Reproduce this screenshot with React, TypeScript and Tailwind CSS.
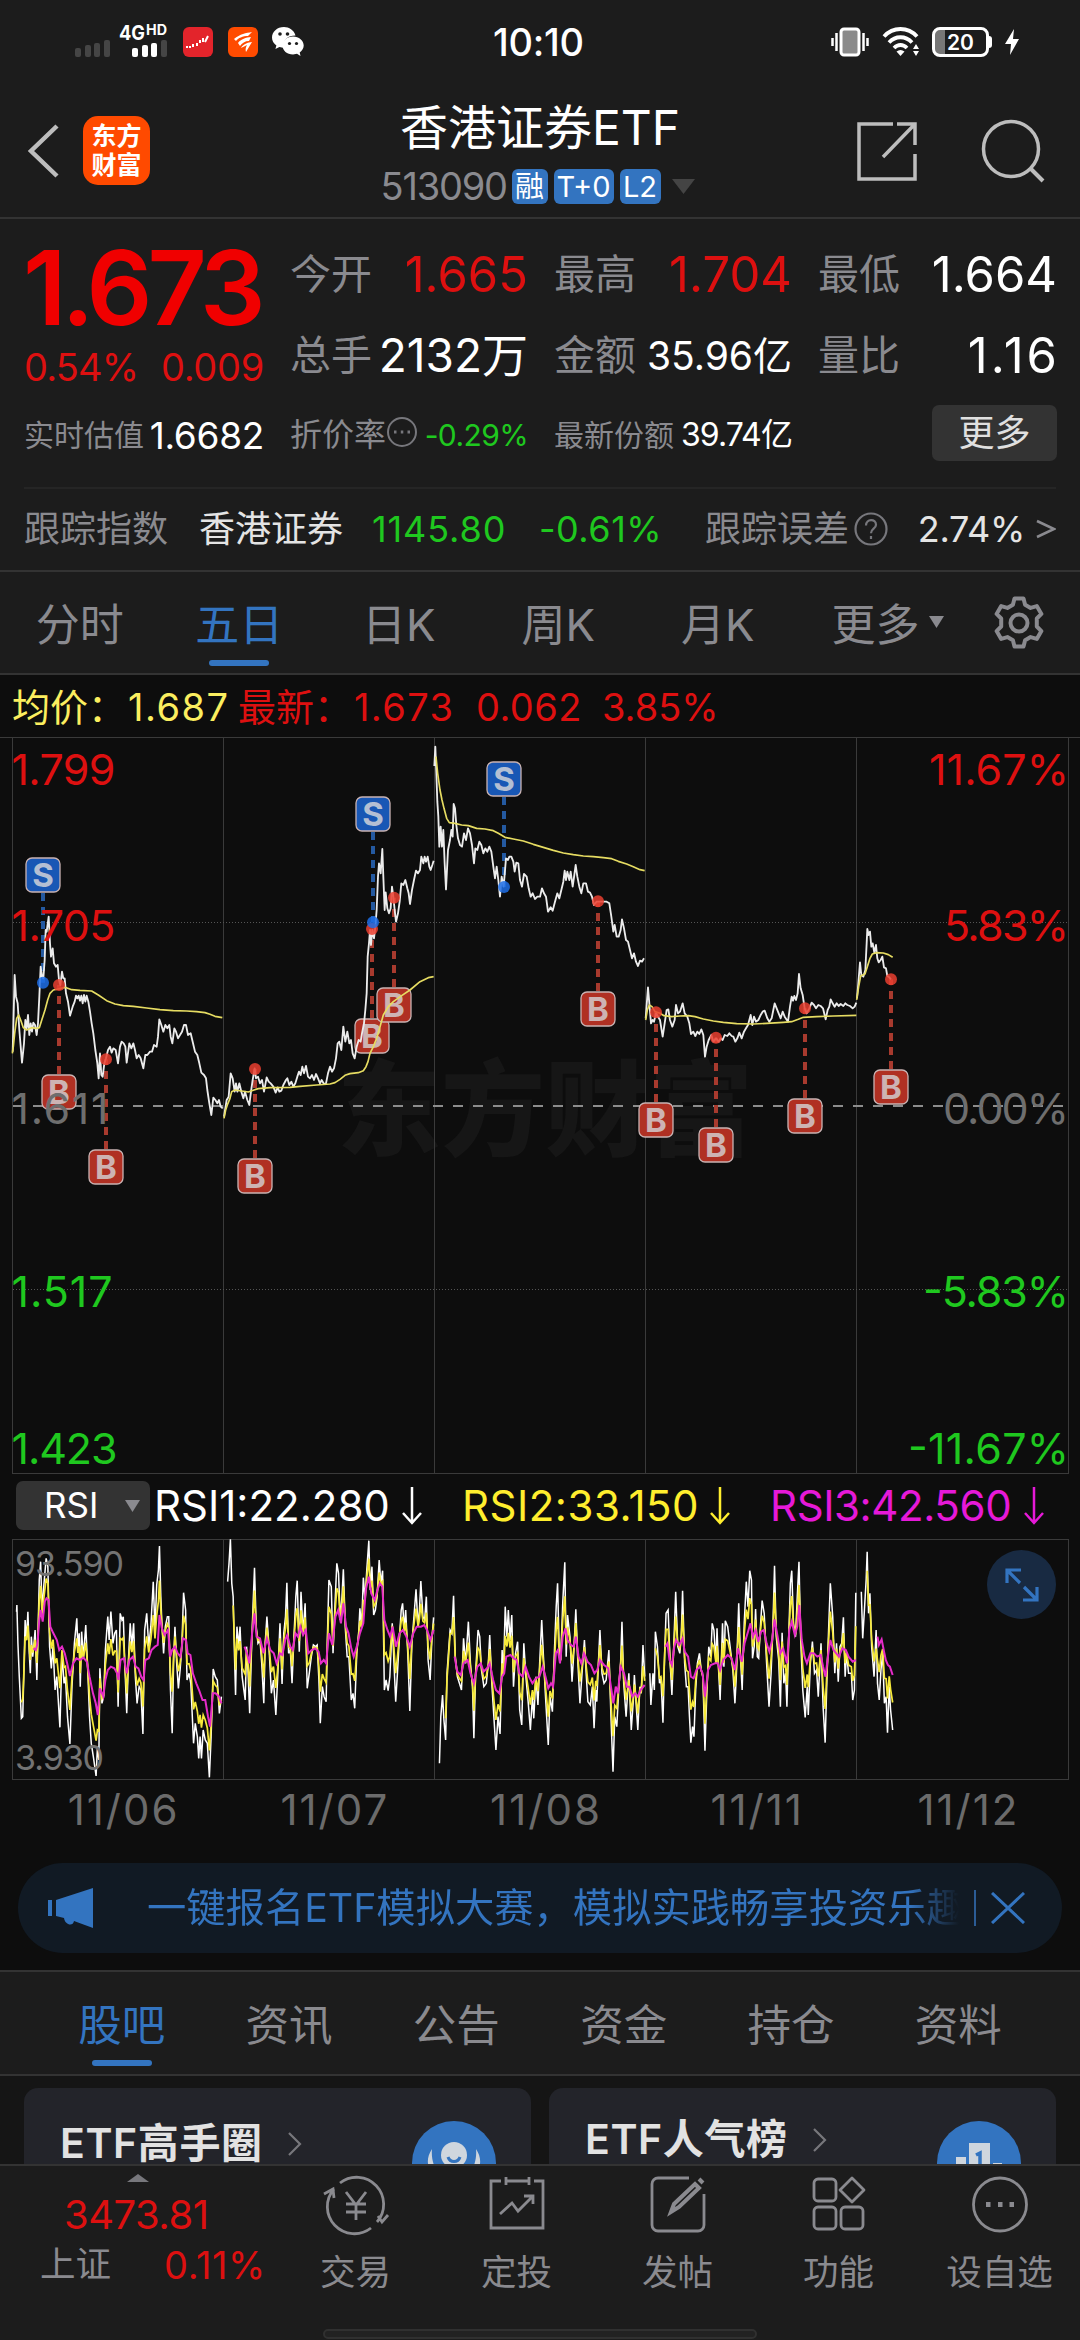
import React from 'react';

type Point = [number, number];

const toPoints = (s: string, dx = 0): Point[] =>
  s.trim().split(/\s+/).map((p) => {
    const [x, y] = p.split(',').map(Number);
    return [x + dx, y];
  });

const toAttr = (pts: Point[]) => pts.map((p) => p.join(',')).join(' ');

/* Intraday price, one entry per session */
const PRICE: Point[][] = [
  toPoints('38,965 44,735 48,800 53,820 58,900 66,998 72,940 76,870 80,895 84,855 88,915 92,880 96,905 100,878 105,885 110,915 114,880 118,800 122,710 126,740 130,745 134,690 137,600 140,605 146,560 150,640 153,680 158,655 162,700 168,710 173,705 177,750 181,765 186,725 190,745 194,745 198,790 204,815 210,857 218,830 224,815 228,797 232,805 236,797 240,812 244,797 248,820 252,795 256,815 260,797 265,815 270,845 275,880 280,910 286,960 292,1000 296,1045 300,970 304,1035 308,1040 313,1000 318,985 324,960 330,950 335,968 340,955 347,960 354,1000 360,950 365,935 371,940 376,950 380,998 388,940 394,955 400,940 405,960 410,985 416,975 422,985 430,1015 436,975 442,975 450,965 456,965 462,945 470,950 474,920 478,868 484,885 490,905 496,885 502,895 508,885 512,920 517,940 523,895 528,905 534,925 540,915 546,905 552,885 558,885 564,915 572,910 578,935 585,965 592,975 598,1000 604,1028 612,1035 618,1045 622,1080 628,1120 634,1155 640,1103 646,1110 652,1120 657,1110 662,1130 668,1135'),
  toPoints('672,1160 680,1110 686,1100 692,1030 698,1045 704,1085 708,1060 712,1085 718,1060 724,1085 730,1105 735,1085 742,1110 748,1125 753,1085 758,1050 764,1015 768,1045 774,1040 780,1060 786,1050 792,1085 800,1042 806,1055 812,1060 820,1070 827,1088 833,1072 838,1085 844,1082 850,1065 858,1050 862,1045 868,1065 874,1055 880,1070 886,1060 892,1040 897,1025 902,1035 907,1010 912,1030 918,1008 924,1040 930,1045 936,1035 942,1050 948,1032 954,1045 960,1060 965,1050 972,1062 978,1060 984,1030 990,1010 996,1025 1002,1015 1008,985 1013,940 1018,935 1024,960 1030,890 1036,935 1042,905 1048,940 1053,930 1058,970 1064,985 1070,950 1076,930 1082,935 1086,910 1092,880 1096,840 1100,790 1103,680 1107,640 1110,600 1113,645 1117,600 1122,625 1126,590 1130,540 1134,440 1137,400 1142,430 1147,357 1150,440 1154,540 1157,487 1162,535 1167,550 1172,535 1176,470 1180,500 1184,540 1188,575 1194,550 1199,515 1204,460 1210,465 1216,450 1222,475 1226,490 1230,522 1236,480 1242,450 1248,422 1254,430 1260,420 1264,380 1270,400 1274,380 1278,395 1283,380 1288,410 1292,420 1297,405 1301,392'),
  toPoints('283,108 286,50 289,130 292,215 295,260 298,350 302,290 306,350 310,300 314,400 318,478 324,360 330,330 334,300 338,320 341,222 345,235 349,285 354,325 360,345 366,350 372,310 378,330 384,295 390,310 396,345 402,400 406,355 412,360 418,335 424,345 430,370 436,355 442,365 448,350 454,365 460,410 465,445 470,410 475,450 480,500 485,440 491,470 498,385 504,390 508,380 514,380 520,395 524,425 529,398 535,400 540,450 546,470 552,432 560,440 566,475 572,500 578,490 585,507 592,500 600,500 606,475 612,490 618,500 624,545 632,532 638,542 645,515 652,490 658,505 664,480 670,455 674,422 678,450 682,425 688,450 692,425 698,470 703,435 707,405 712,440 718,470 724,490 730,460 738,460 744,485 750,488 756,500 762,525 770,515 780,515 790,515 800,515 808,520 814,560 820,605 824,585 830,620 836,620 842,600 846,568 852,595 858,630 864,635 870,660 876,685 882,670 888,695 894,708 900,692 906,695 912,685', 1020),
  toPoints('17,865 24,772 28,820 33,880 38,870 42,875 48,850 54,860 60,870 68,920 74,880 80,840 85,838 90,870 97,890 104,870 108,825 114,850 120,845 128,820 134,850 142,860 148,880 153,912 160,905 166,918 172,905 178,912 184,898 190,915 195,980 200,950 206,930 214,915 220,935 228,925 236,935 242,925 248,930 254,915 262,918 268,910 275,918 280,920 286,935 292,925 298,908 305,925 312,905 318,895 324,885 332,855 337,885 342,860 348,875 355,870 362,855 368,845 374,842 382,865 388,875 395,865 400,840 404,820 410,835 416,850 422,865 428,845 434,860 444,875 450,830 455,800 459,812 463,798 468,810 473,790 477,732 482,775 488,795 494,835 500,850 508,835 515,818 522,825 528,835 535,825 542,828 549,835 557,868 563,840 568,830 572,808 578,820 584,830 590,820 596,828 602,822 610,828 616,820 622,825 630,828 638,835 644,830 649,818', 1920),
  toPoints('651,805 655,760 660,697 664,735 670,740 676,720 680,640 682,597 686,615 690,605 694,650 698,640 703,668 708,645 712,685 716,697 722,690 727,680 732,712 738,715 742,738 748,742 753,748', 1920),
];

const AVERAGE: Point[][] = [
  toPoints('37,970 40,950 44,910 50,865 56,855 62,870 70,893 80,900 95,893 110,895 118,893 126,868 135,840 143,810 150,790 160,780 175,777 195,772 215,779 240,781 275,783 295,795 320,812 345,822 370,827 400,829 440,834 480,839 520,842 560,843 590,845 615,848 630,853 645,859 667,863'),
  toPoints('672,1165 677,1140 682,1125 690,1105 695,1085 705,1080 725,1083 745,1086 762,1080 775,1076 810,1073 870,1072 900,1069 950,1065 990,1062 1005,1058 1020,1048 1035,1036 1050,1031 1075,1028 1090,1022 1098,1010 1104,995 1110,970 1120,950 1130,925 1140,890 1150,855 1165,830 1180,815 1205,797 1230,780 1260,755 1285,743 1301,740'),
  toPoints('288,80 293,130 300,180 306,210 312,235 320,265 328,278 345,280 365,285 385,287 410,295 435,297 460,302 475,310 495,322 520,327 550,333 580,343 610,352 640,361 670,369 700,374 730,378 760,380 790,383 815,386 835,394 860,402 880,410 900,419 914,422', 1020),
  toPoints('17,870 22,840 28,825 36,830 45,845 60,850 72,857 95,860 120,858 145,857 165,860 190,867 220,873 250,877 290,881 340,882 380,880 430,877 455,875 475,868 490,862 530,860 580,858 649,856', 1920),
  toPoints('650,810 656,770 662,738 675,732 682,710 690,685 697,672 710,668 730,669 745,674 758,682', 1920),
];

interface Trade {
  side: 'B' | 'S';
  x: number;
  box: number;
  dot: number;
}

const TRADES: Trade[] = [
  { side: 'S', x: 43, box: 875, dot: 982.7 },
  { side: 'B', x: 59, box: 1092, dot: 985 },
  { side: 'B', x: 106, box: 1167, dot: 1059.3 },
  { side: 'B', x: 255, box: 1176, dot: 1069 },
  { side: 'B', x: 372, box: 1036, dot: 929 },
  { side: 'S', x: 373, box: 814, dot: 922.3 },
  { side: 'B', x: 394, box: 1005, dot: 897.7 },
  { side: 'S', x: 504, box: 779, dot: 887 },
  { side: 'B', x: 598, box: 1009, dot: 901.3 },
  { side: 'B', x: 656, box: 1120, dot: 1012.3 },
  { side: 'B', x: 716, box: 1145, dot: 1037.7 },
  { side: 'B', x: 805, box: 1116, dot: 1008.3 },
  { side: 'B', x: 891, box: 1087, dot: 979.3 },
];

const RSI_FAST: Point[][] = [
  toPoints('48,245 49,225 52,340 56,440 62,565 66,560 69,440 73,270 77,330 81,245 85,370 88,430 91,320 95,380 98,350 102,300 107,450 110,330 114,150 118,95 122,240 127,170 134,85 139,110 144,350 149,415 154,350 160,480 165,440 174,592 180,370 186,460 190,440 196,560 203,642 209,470 216,340 223,265 226,350 230,310 233,470 237,305 242,385 249,285 254,400 260,560 265,640 271,680 279,738 283,650 287,690 290,415 296,520 301,500 306,360 313,260 317,330 322,245 328,340 333,310 338,300 343,530 349,250 354,270 358,260 363,420 368,550 373,390 378,280 383,350 388,280 393,440 398,520 404,470 409,480 415,612 420,300 426,250 432,350 438,290 445,155 450,300 455,165 460,120 463,48 467,200 470,280 475,370 480,290 486,260 490,260 495,480 500,610 504,400 508,290 513,400 518,475 523,420 528,350 533,188 539,240 543,450 549,430 554,460 562,640 567,580 573,620 577,685 581,620 585,685 590,600 596,630 602,640 608,742 613,620 619,417 625,440 631,450 637,550 643,500'),
  toPoints('661,155 665,100 669,28 673,160 677,200 681,380 684,495 688,290 693,350 697,290 703,440 712,510 716,350 720,420 725,550 730,370 735,220 739,113 744,290 749,340 755,330 760,400 766,520 770,340 775,260 781,350 788,490 794,450 801,555 806,450 813,280 819,462 824,310 829,260 833,158 838,370 843,360 848,460 854,310 859,200 863,152 869,365 874,185 880,310 886,220 892,475 898,430 904,380 910,345 916,350 921,345 926,450 930,580 936,470 941,500 947,515 951,310 955,150 962,170 967,370 972,240 978,100 983,130 988,270 993,200 997,118 1003,300 1008,380 1013,380 1020,510 1025,490 1030,535 1036,370 1042,300 1045,235 1050,290 1055,143 1060,210 1065,120 1071,32 1075,180 1080,110 1085,255 1090,240 1095,200 1101,90 1106,160 1111,122 1116,480 1121,450 1127,482 1132,440 1139,280 1144,400 1149,515 1154,430 1160,320 1165,240 1169,220 1174,300 1178,240 1184,370 1190,543 1196,340 1202,260 1208,178 1214,290 1218,240 1222,153 1228,260 1233,270 1238,200 1243,390 1249,450 1254,330 1259,262'),
  [
    ...toPoints('1276,700 1280,560 1285,495 1289,570 1294,630 1298,430 1302,370 1307,300 1312,310 1317,197 1322,380 1328,440 1334,460 1340,480 1346,325 1352,400 1360,275 1366,400 1372,470 1376,625 1381,430 1388,300 1393,320 1398,420 1405,470 1412,460 1418,400 1422,315 1428,460 1434,560 1440,660 1446,560 1452,612 1458,360 1462,430 1467,230 1472,320 1476,240 1481,330 1486,255 1491,470 1497,370 1503,335 1509,540 1515,585 1521,340 1527,440 1534,520 1540,600 1546,500 1550,565 1556,440 1562,525 1567,400'),
    ...toPoints('5,270 10,380 16,500 24,645 29,500 36,545 42,360 47,230 51,160 56,370 60,390 66,220 72,97 76,380 80,255 87,320 93,455 98,370 104,238 110,400 116,520 122,430 129,330 134,430 139,515 146,525 152,470 157,595 162,480 165,515 170,390 174,300 180,430 186,460 192,450 200,360 206,560 212,725 217,560 223,590 229,470 234,400 238,275 243,460 250,560 258,430 265,600 271,510 274,435 279,520 284,600 290,470 294,490 299,345 304,440', 1568),
  ],
  toPoints('319,430 322,525 328,430 332,480 335,305 341,350 347,460 351,440 357,578 362,370 366,250 372,240 378,400 383,495 388,360 394,185 400,350 406,370 410,320 414,182 420,400 425,470 430,470 434,560 438,638 443,590 447,620 452,480 457,400 463,370 468,420 473,440 479,662 484,500 490,350 496,380 500,280 505,300 511,400 514,295 519,430 523,510 530,280 534,410 538,272 545,290 552,350 560,420 566,520 570,440 577,220 582,380 587,480 593,280 599,155 604,230 609,122 614,150 617,385 622,350 626,237 631,380 635,385 640,290 645,212 651,250 658,400 665,530 671,430 676,300 681,107 686,320 693,390 698,530 703,308 708,460 713,430 717,530 722,330 727,160 731,122 736,280 742,320 747,200 752,95 757,330 763,480 770,562 776,470 779,555 785,400 791,335 797,430 803,420 808,500 813,400 816,340 822,530 828,638 833,450 838,300 843,160 850,260 856,430 861,340 866,455 871,350 876,340 881,262 886,440 890,370 896,430 904,430 908,510 913,480 917,188', 1568),
  toPoints('933,185 937,325 942,240 947,150 950,65 954,250 958,190 963,350 970,440 976,300 980,460 985,510 990,420 995,370 1000,520 1005,500 1009,608 1014,470 1018,540 1024,600', 1568),
];

const RSI_SLOW: Point[][] = [
  toPoints('97,355 104,360 109,340 114,270 118,240 124,275 130,215 135,205 141,210 146,290 155,310 165,330 172,360 180,350 188,370 195,400 203,438 212,400 222,385 232,390 242,383 252,395 260,440 270,490 278,520 284,555 290,475 300,500 306,450 313,420 322,410 332,415 340,430 344,450 350,390 360,385 368,430 376,390 386,380 394,410 402,415 410,440 417,450 422,390 432,385 440,360 450,350 458,345 463,255 470,295 478,315 488,300 494,380 500,360 508,350 516,370 524,380 531,325 540,330 545,370 553,375 560,430 570,460 578,480 588,510 596,510 604,560 610,590 618,490 626,490 636,500 643,520'),
  toPoints('710,350 717,370 724,400 732,310 739,250 745,320 755,325 765,370 775,325 785,360 795,370 803,400 813,370 820,375 828,330 834,315 843,350 850,360 858,310 865,320 872,290 880,315 888,300 895,370 905,360 915,355 925,365 932,400 940,390 947,400 955,310 965,345 974,260 982,240 990,280 997,220 1005,290 1012,310 1020,355 1027,380 1036,350 1045,310 1055,280 1062,180 1071,140 1078,190 1088,210 1096,180 1103,160 1110,170 1116,270 1125,300 1133,320 1140,290 1150,350 1160,310 1170,300 1180,320 1190,350 1200,310 1210,290 1222,290 1232,285 1240,300 1250,330 1259,300'),
  [
    ...toPoints('1320,380 1328,425 1338,435 1346,400 1358,390 1366,430 1376,460 1386,410 1396,400 1404,425 1414,415 1422,400 1432,450 1440,480 1450,490 1458,440 1464,430 1470,380 1482,375 1492,385 1500,390 1508,430 1518,440 1526,410 1536,440 1546,460 1556,445 1566,440'),
    ...toPoints('8,410 16,440 24,475 32,460 38,470 46,370 52,360 58,400 66,320 74,295 80,330 90,345 98,350 104,320 112,380 120,400 128,370 138,395 148,405 158,430 166,420 174,390 186,405 198,415 206,470 213,520 220,470 226,490 234,410 244,430 252,470 260,470 268,500 276,490 284,500 292,480 304,465', 1568),
  ],
  toPoints('364,350 370,340 376,390 383,405 390,350 395,330 404,345 414,325 420,365 430,380 438,440 446,445 454,420 464,410 472,430 479,500 488,420 496,405 508,400 516,400 523,420 532,390 545,375 556,385 566,420 575,355 586,395 594,340 604,305 611,280 618,320 626,300 634,335 642,305 650,300 658,340 666,365 674,330 681,268 690,320 698,370 706,355 717,400 724,300 731,275 740,315 747,290 753,225 760,330 768,380 775,400 785,370 795,370 805,380 815,375 822,410 829,440 836,380 843,330 852,360 860,370 868,380 878,355 888,360 896,380 908,395 917,390', 1568),
  toPoints('980,320 984,345 992,328 998,360 1004,390 1010,405 1016,410 1024,435', 1568),
];

const valueAt = (pts: Point[], x: number): number | null => {
  for (let i = 1; i < pts.length; i++) {
    const [x0, y0] = pts[i - 1];
    const [x1, y1] = pts[i];
    if (x >= x0 && x <= x1) return y0 + ((y1 - y0) * (x - x0)) / (x1 - x0);
  }
  return null;
};

// the mid line runs half way between the fast and the slow one
const RSI_MID: Point[][] = RSI_FAST.map((fast, day) =>
  fast
    .map(([x, y], i): Point => {
      const near = fast.slice(Math.max(0, i - 2), i + 3);
      const mean = near.reduce((sum, p) => sum + p[1], 0) / near.length;
      return [x, (y + (valueAt(RSI_SLOW[day], x) ?? mean)) / 2];
    })
    .slice(4)
);

const PRICE_LABELS = [
  { y: 785, price: '1.799', pw: 104, pct: '11.67%', cw: 140, color: '#dd1010' },
  { y: 941, price: '1.705', pw: 104, pct: '5.83%', cw: 125, color: '#dd1010' },
  { y: 1124, price: '1.611', pw: 97, pct: '0.00%', cw: 126, color: '#6e6e6e' },
  { y: 1307, price: '1.517', pw: 101, pct: '-5.83%', cw: 146, color: '#1fc81f' },
  { y: 1464, price: '1.423', pw: 106, pct: '-11.67%', cw: 161, color: '#1fc81f' },
];

const GRID_X = [12.5, 223.5, 434.5, 645.5, 856.5, 1068.5];

const StatusBar = () => (
  <div className="flex h-[84px] items-center pl-[75px] pr-[61px]">
    <svg className="h-[40px] w-[94px] overflow-visible" viewBox="0 -2 94 40">
      <g fill="#454545">
        <rect x="0" y="24" width="6" height="9" rx="2" />
        <rect x="10" y="21" width="6" height="12" rx="2" />
        <rect x="19" y="19" width="6" height="14" rx="2" />
        <rect x="29" y="16" width="6" height="17" rx="2" />
        <rect x="86" y="16" width="6" height="17" rx="2" />
      </g>
      <g fill="#fff">
        <rect x="57" y="24" width="6" height="9" rx="2" />
        <rect x="67" y="21" width="6" height="12" rx="2" />
        <rect x="76" y="19" width="6" height="14" rx="2" />
        <text x="44" y="15.500" fontSize="20" fontWeight="700" textLength="26" lengthAdjust="spacingAndGlyphs">4G</text>
        <text x="71" y="11" fontSize="14" fontWeight="700" textLength="21" lengthAdjust="spacingAndGlyphs">HD</text>
      </g>
    </svg>
    <svg className="ml-[14px] h-[30px] w-[30px]" viewBox="0 0 30 30">
      <rect width="30" height="30" rx="6" fill="#e3242b" />
      <path d="M3 20h2M7 21v-2M10 20v-3M14 19v-3M17 16v-3M20 15v-4M22 15l3-6" stroke="#fff" strokeWidth="2" fill="none" />
    </svg>
    <svg className="ml-[15px] h-[30px] w-[30px]" viewBox="0 0 30 30">
      <rect width="30" height="30" rx="6" fill="#ff4b00" />
      <path d="M6 12C12 7 18 6 24 5L20 9C15 9 10 11 8 14ZM10 16C13 12 18 10.500 23 10L21 14C17 14 14 16 12 19ZM13 21C15 17 20 15.500 24 15L18 25C17 22 18 20 19 18Z" fill="#fff" />
    </svg>
    <svg className="ml-[14px] h-[30px] w-[32px]" viewBox="0 0 32 30">
      <path d="M12 0C5 0 0 5 0 10.500c0 3.300 1.600 6 4.400 8L3.400 22l4-2 5 1C10 13 16 8.500 23.500 8.500 22 3 17 0 12 0Z" fill="#fff" />
      <path d="M21 9.500c-6 0-10.500 4-10.500 9S15 27.500 21 27.500l4-.7L28.500 29l-.8-3.500c2.500-1.800 4-4.200 4-7 0-5-4.700-9-10.700-9Z" fill="#fff" />
      <g fill="#1c1c1c">
        <circle cx="8" cy="7" r="1.800" />
        <circle cx="15.500" cy="7" r="1.800" />
        <circle cx="17.500" cy="16.500" r="1.600" />
        <circle cx="24.500" cy="16.500" r="1.600" />
      </g>
    </svg>
    <span className="ml-[189px] w-[93px] text-[38px] font-medium leading-none tracking-[-0.3px] text-white">10:10</span>
    <svg className="ml-auto h-[32px] w-[38px]" viewBox="0 0 38 32" fill="none" stroke="#fff">
      <rect x="10" y="3" width="18" height="26" rx="3" strokeWidth="3" fill="#8a8a8a" />
      <path d="M5.500 7v18M32.500 7v18M1.500 12v8M36.500 12v8" strokeWidth="2.500" />
    </svg>
    <svg className="ml-[13px] h-[30px] w-[39px]" viewBox="0 0 39 30" fill="none" stroke="#fff">
      <path d="M2 9.500C11-.5 26-.5 35 9.500M7 15.500c6.500-7 16.500-7 23 0M12 21c4-4 9-4 13 0" strokeWidth="3.800" />
      <path d="M18.500 29l-4-4.500c2.500-2 5.500-2 8 0Z" fill="#fff" stroke="none" />
      <path d="M31 22l3-5 3 5ZM31 24l3 5 3-5Z" fill="#fff" stroke="none" />
    </svg>
    <div className="ml-[11px] flex h-[30px] w-[57px] items-center justify-center rounded-[8px] border-[3px] border-white bg-linear-to-r from-[#777] from-20% to-transparent to-20% text-[21px] font-semibold leading-none text-white">20</div>
    <div className="h-[12px] w-[3px] rounded-r bg-white" />
    <svg className="ml-[13px] h-[26px] w-[14px]" viewBox="0 0 14 26">
      <path d="M9 0 0 15h6L5 26 14 10H8Z" fill="#fff" />
    </svg>
  </div>
);

const Header = () => (
  <header className="flex h-[135px] items-center border-b-2 border-[#333] pl-[27px] pr-[35px]">
    <svg className="h-[54px] w-[32px]" viewBox="0 0 32 54" fill="none" stroke="#bdbdbd" strokeWidth="4.500">
      <path d="M30 2 4 27 30 52" />
    </svg>
    <div className="ml-[24px] flex h-[69px] w-[67px] flex-col items-center justify-center rounded-[15px] bg-[#ff4a00] text-[25px] font-bold leading-[29px] text-white">
      <span>东方</span>
      <span>财富</span>
    </div>
    <div className="ml-[210px] flex w-[360px] flex-col items-center pt-[13px]">
      <h1 className="h-[58px] text-[48px] leading-[58px] text-white">香港证券ETF</h1>
      <div className="-ml-[5px] flex h-[58px] items-center">
        <span className="w-[131px] text-[38px] leading-none tracking-[-1.2px] text-[#8a8a8f]">513090</span>
        <div className="flex gap-[6px] text-[29px] leading-[35px] text-white">
          <span className="h-[35px] w-[36px] rounded-[6px] bg-[#3374c0] text-center">融</span>
          <span className="h-[35px] w-[60px] rounded-[6px] bg-[#3374c0] text-center">T+0</span>
          <span className="h-[35px] w-[41px] rounded-[6px] bg-[#3374c0] text-center">L2</span>
        </div>
        <svg className="ml-[11px] h-[15px] w-[23px]" viewBox="0 0 23 15">
          <path d="M0 0h23L11.500 15Z" fill="#444" />
        </svg>
      </div>
    </div>
    <svg className="ml-auto h-[60px] w-[60px]" viewBox="0 0 60 60" fill="none" stroke="#bdbdbd" strokeWidth="3.500">
      <path d="M36 3H2V58H58V33M58 24V3H40M58 3 26 36" />
    </svg>
    <svg className="ml-[64px] h-[64px] w-[64px]" viewBox="0 0 64 64" fill="none" stroke="#bdbdbd" strokeWidth="3.500">
      <circle cx="30" cy="30" r="27.500" />
      <path d="M49 49 62 62" strokeWidth="4" />
    </svg>
  </header>
);

interface StatProps {
  label: string;
  value: string;
  valueClass: string;
}

const Stat: React.FC<StatProps> = ({ label, value, valueClass }) => (
  <div className="flex items-center justify-between whitespace-nowrap">
    <span className="text-[41px] leading-none text-[#8a8a8f]">{label}</span>
    <span className={'leading-none ' + valueClass}>{value}</span>
  </div>
);

const Quote = () => (
  <section className="h-[351px] px-[24px] pt-[14px]">
    <div className="grid grid-cols-[240px_238px_238px_239px] grid-rows-[82px_80px] gap-x-[26px]">
      <div className="row-span-2">
        <div className="-ml-px h-[110px] text-[103px] font-semibold leading-[110px] tracking-[-5px] text-[#f00000]">1.673</div>
        <div className="flex h-[48px] items-center justify-between text-[38px] leading-none text-[#dd1010]">
          <span className="tracking-[-0.8px]">0.54%</span>
          <span className="tracking-[-0.3px]">0.009</span>
        </div>
      </div>
      <Stat label="今开" value="1.665" valueClass="text-[49px] text-[#dd1010]" />
      <Stat label="最高" value="1.704" valueClass="text-[49px] text-[#dd1010]" />
      <Stat label="最低" value="1.664" valueClass="text-[49px] text-white" />
      <Stat label="总手" value="2132万" valueClass="text-[46px] text-white" />
      <Stat label="金额" value="35.96亿" valueClass="text-[39px] text-white" />
      <Stat label="量比" value="1.16" valueClass="mr-[-3px] text-[49px] tracking-[3px] text-white" />
    </div>
    <div className="grid h-[80px] grid-cols-[240px_238px_238px_239px] items-center gap-x-[26px] whitespace-nowrap leading-none">
      <div className="flex items-center justify-between">
        <span className="text-[30px] text-[#8a8a8f]">实时估值</span>
        <span className="text-[37px] tracking-[-0.3px] text-white">1.6682</span>
      </div>
      <div className="flex items-center">
        <span className="text-[32px] text-[#8a8a8f]">折价率</span>
        <svg className="-mt-[6px] h-[32px] w-[32px]" viewBox="0 0 32 32" fill="none" stroke="#77777c" strokeWidth="2">
          <circle cx="16" cy="16" r="14" />
          <path d="M8 16h2.500M14.800 16h2.500M21.500 16H24" strokeWidth="3" />
        </svg>
        <span className="ml-auto text-[30px] tracking-[-0.6px] text-[#1fc81f]">-0.29%</span>
      </div>
      <div className="flex items-center justify-between">
        <span className="text-[30px] text-[#8a8a8f]">最新份额</span>
        <span className="text-[32px] tracking-[-0.9px] text-white">39.74亿</span>
      </div>
      <div className="-mt-[4px] ml-auto flex h-[56px] w-[125px] items-center justify-center rounded-[7px] bg-[#333] text-[36px] text-[#e0e0e0]">更多</div>
    </div>
    <div className="mt-[12px] flex h-[82px] items-center whitespace-nowrap border-t-2 border-[#252525] text-[36px] leading-none">
      <span className="w-[175px] text-[#8a8a8f]">跟踪指数</span>
      <span className="w-[173px] text-[#e4e4e4]">香港证券</span>
      <span className="w-[167px] tracking-[0.9px] text-[#1fc81f]">1145.80</span>
      <span className="w-[166px] tracking-[0.5px] text-[#1fc81f]">-0.61%</span>
      <span className="text-[#8a8a8f]">跟踪误差</span>
      <svg className="ml-[5px] h-[34px] w-[34px]" viewBox="0 0 34 34" fill="none" stroke="#77777c" strokeWidth="2.200">
        <circle cx="17" cy="17" r="15.500" />
        <path d="M12 13.500c0-7 10-7 10-.8 0 4-5 4-5 8.500M17 24v3" />
      </svg>
      <span className="ml-auto mr-[11px] tracking-[-0.3px] text-[#e4e4e4]">2.74%</span>
      <svg className="h-[20px] w-[20px]" viewBox="0 0 20 20" fill="none" stroke="#8a8a8f" strokeWidth="2.500">
        <path d="M1 2 18 10 1 18" />
      </svg>
    </div>
  </section>
);

const PeriodTabs = () => (
  <nav className="flex h-[105px] border-y-2 border-[#333] text-[44px] text-[#8a8a8f]">
    {['分时', '五日', '日K', '周K', '月K'].map((name, i) => (
      <div key={name} className={'flex w-[159.500px] flex-col items-center pt-[19px] ' + (i === 1 ? 'text-[#3374c0]' : '')}>
        <span className="h-[68px] leading-[68px]">{name}</span>
        {i === 1 && <span className="mt-px h-[6px] w-[60px] rounded-full bg-[#3374c0]" />}
      </div>
    ))}
    <div className="ml-[34px] mt-[19px] flex h-[68px] items-center gap-[9px] leading-none">
      更多
      <svg className="-mt-[6px] h-[12px] w-[15px]" viewBox="0 0 15 12">
        <path d="M0 0h15L7.500 12Z" fill="#8a8a8f" />
      </svg>
    </div>
    <svg className="ml-auto mr-[34px] mt-[24px] h-[54px] w-[54px]" viewBox="0 0 54 54" fill="none" stroke="#8a8a8f" strokeWidth="4" strokeLinejoin="round">
      <path d="M22.500 2.500h9l1.600 6.200 5.500 3.200 6.200-1.800 4.600 7.800-4.600 4.600v8l4.600 4.600-4.600 7.800-6.200-1.800-5.500 3.200-1.600 6.200h-9l-1.600-6.200-5.500-3.200-6.200 1.800-4.600-7.800 4.600-4.600v-8l-4.600-4.600 4.600-7.800 6.200 1.800 5.500-3.200Z" />
      <circle cx="27" cy="27" r="8.500" />
    </svg>
  </nav>
);

const PriceInfo = () => (
  <div className="flex h-[62px] items-center whitespace-nowrap pl-[12px] pt-[2px] text-[38px] leading-none">
    <span className="w-[116px] text-[#fbee5f]">均价：</span>
    <span className="w-[110px] tracking-[1.5px] text-[#fbee5f]">1.687</span>
    <span className="w-[116px] text-[#dd1010]">最新：</span>
    <span className="w-[122px] tracking-[1.4px] text-[#dd1010]">1.673</span>
    <span className="w-[126px] tracking-[0.4px] text-[#dd1010]">0.062</span>
    <span className="text-[#dd1010]">3.85%</span>
  </div>
);

const PriceChart = () => (
  <svg className="block h-[738px] w-[1080px]" viewBox="0 737 1080 738" fill="none">
    <text x="337" y="1148" fontSize="104" fontWeight="900" fill="#161616">东方财富</text>
    <g stroke="#3a3a3a" strokeWidth="1">
      <path d="M0 737.500H1080M12 1473.500H1069" />
      {GRID_X.map((x) => (
        <path key={x} d={`M${x} 738V1474`} />
      ))}
      <path d="M13 922.500H1068M13 1289.500H1068" strokeDasharray="1 2" stroke="#555" />
    </g>
    <path d="M13 1106H1068" stroke="#8c8c8c" strokeWidth="2" strokeDasharray="10 10" />
    {TRADES.map((t) => (
      <path
        key={t.x}
        d={`M${t.x} ${t.side === 'B' ? t.box - 18 : t.box + 18}V${t.dot}`}
        stroke={t.side === 'B' ? '#a83a2e' : '#2459a0'}
        strokeWidth="4"
        strokeDasharray="8 6"
      />
    ))}
    {TRADES.map((t) => (
      <g key={t.x}>
        <rect x={t.x - 17} y={t.box - 17} width="34" height="34" rx="6" fill={t.side === 'B' ? '#b03023' : '#1857b5'} stroke="#c9b3b3" strokeWidth="1.300" />
        <text x={t.x} y={t.box + 12} fontSize="33" fontWeight="700" fill={t.side === 'B' ? '#cdb3b3' : '#b4bfd3'} textAnchor="middle">{t.side}</text>
      </g>
    ))}
    <g transform="translate(0 730) scale(0.33333)" strokeLinejoin="round">
      {PRICE.map((pts, i) => (
        <polyline key={i} points={toAttr(pts)} stroke="#ececec" strokeWidth="5.500" />
      ))}
      {AVERAGE.map((pts, i) => (
        <polyline key={i} points={toAttr(pts)} stroke="#e6dc62" strokeWidth="5" />
      ))}
    </g>
    {TRADES.map((t) => (
      <circle key={t.x} cx={t.x} cy={t.dot} r="6" fill={t.side === 'B' ? '#ea4030' : '#1f6fe8'} fillOpacity="0.850" />
    ))}
    {PRICE_LABELS.map((l) => (
      <g key={l.y} fill={l.color} fontSize="43">
        <text x="11.500" y={l.y} textLength={l.pw}>{l.price}</text>
        <text x={1069 - l.cw} y={l.y} textLength={l.cw}>{l.pct}</text>
      </g>
    ))}
  </svg>
);

const DownArrow = ({ color }: { color: string }) => (
  <svg className="ml-[12px] h-[38px] w-[20px]" viewBox="0 0 20 38" fill="none" stroke={color} strokeWidth="2.500">
    <path d="M10 0V36M1 26l9 10 9-10" />
  </svg>
);

const RsiBar = () => (
  <div className="flex h-[63px] items-center whitespace-nowrap pb-[2px] pl-[16px] text-[42px] leading-none">
    <div className="flex h-[49px] w-[134px] items-center rounded-[7px] bg-[#333] pl-[28px] text-[35px] text-white">
      <span className="w-[81px]">RSI</span>
      <svg className="h-[12px] w-[15px]" viewBox="0 0 15 12">
        <path d="M0 0h15L7.500 12Z" fill="#8a8a8f" />
      </svg>
    </div>
    <div className="ml-[4px] flex w-[308px] items-center text-white">
      <span className="w-[236px]">RSI1:22.280</span>
      <DownArrow color="#fff" />
    </div>
    <div className="flex w-[308px] items-center text-[#ffee2e]">
      <span className="w-[236px] tracking-[0.5px]">RSI2:33.150</span>
      <DownArrow color="#ffee2e" />
    </div>
    <div className="flex items-center text-[#e619d8]">
      <span className="w-[242px] tracking-[-0.4px]">RSI3:42.560</span>
      <DownArrow color="#e619d8" />
    </div>
  </div>
);

const RsiChart = () => (
  <div className="relative">
    <svg className="block h-[243px] w-[1080px]" viewBox="0 1538 1080 243" fill="none">
      <path d="M12 1539.500H1069M12 1779.500H1069" stroke="#3a3a3a" />
      {GRID_X.map((x) => (
        <path key={x} d={`M${x} 1539V1780`} stroke="#3a3a3a" />
      ))}
      <g transform="translate(0 1530) scale(0.34439 0.33333)">
        {RSI_FAST.map((pts, i) => (
          <polyline key={i} points={toAttr(pts)} stroke="#fff" strokeWidth="1.500" vectorEffect="non-scaling-stroke" />
        ))}
        {RSI_MID.map((pts, i) => (
          <polyline key={i} points={toAttr(pts)} stroke="#f6e93a" strokeWidth="1.700" vectorEffect="non-scaling-stroke" />
        ))}
        {RSI_SLOW.map((pts, i) => (
          <polyline key={i} points={toAttr(pts)} stroke="#e62bc8" strokeWidth="2" vectorEffect="non-scaling-stroke" />
        ))}
      </g>
      <g fill="#737373" fontSize="34">
        <text x="15" y="1576" textLength="109">93.590</text>
        <text x="15" y="1770" textLength="89">3.930</text>
      </g>
    </svg>
    <div className="absolute right-[24px] top-[12px] flex h-[69px] w-[69px] items-center justify-center rounded-full bg-[#182a42]">
      <svg className="h-[34px] w-[34px]" viewBox="0 0 34 34" fill="none" stroke="#3374c0" strokeWidth="3.200">
        <path d="M2 15V2h14M2 2l13 13M32 19v13H18M32 32 19 19" />
      </svg>
    </div>
  </div>
);

const Dates = () => (
  <div className="grid h-[82px] grid-cols-5 pl-[18px] pr-[6px] text-center text-[42px] leading-[57px] tracking-[2px] text-[#6b6b6b]">
    {['11/06', '11/07', '11/08', '11/11', '11/12'].map((d) => (
      <span key={d}>{d}</span>
    ))}
  </div>
);

const Banner = () => (
  <div className="mx-[18px] mb-[17px] flex h-[90px] items-center rounded-full bg-[#111a24] pl-[30px] text-[#3374c0]">
    <svg className="h-[40px] w-[46px]" viewBox="0 0 46 40" fill="#3374c0">
      <path d="M0 12h4v16H0ZM8 12 45 0V40L26 33c-1 6-9 4-10-3L8 28Z" />
    </svg>
    <div className="ml-[53px] w-[812px] overflow-hidden whitespace-nowrap bg-linear-to-r from-[#3374c0] from-94% to-[#111a24] bg-clip-text text-[39.300px] leading-[56px] text-transparent">
      一键报名ETF模拟大赛，模拟实践畅享投资乐趣
    </div>
    <div className="ml-[15px] h-[36px] w-[2px] bg-[#2b5c96]" />
    <svg className="ml-[15px] h-[32px] w-[34px]" viewBox="0 0 34 32" fill="none" stroke="#3374c0" strokeWidth="3">
      <path d="M1 1 33 31M33 1 1 31" />
    </svg>
  </div>
);

const SectionTabs = () => (
  <nav className="grid h-[106px] grid-cols-6 border-y-2 border-[#333] bg-[#1c1c1c] px-[38px] text-[43.500px] text-[#8a8a8f]">
    {['股吧', '资讯', '公告', '资金', '持仓', '资料'].map((name, i) => (
      <div key={name} className={'flex flex-col items-center pt-[19px] ' + (i === 0 ? 'text-[#3374c0]' : '')}>
        <span className="h-[68px] leading-[68px]">{name}</span>
        {i === 0 && <span className="mt-px h-[6px] w-[60px] rounded-full bg-[#3374c0]" />}
      </div>
    ))}
  </nav>
);

const CardChevron = () => (
  <svg className="ml-[25px] h-[24px] w-[14px]" viewBox="0 0 14 24" fill="none" stroke="#77777c" strokeWidth="2.200">
    <path d="M1 1 12 12 1 23" />
  </svg>
);

const Cards = () => (
  <div className="flex h-[88px] gap-[18px] overflow-hidden bg-[#151515] px-[24px] pt-[12px]">
    <div className="flex h-[150px] flex-1 rounded-[14px] bg-[#23242a] pl-[36px] pr-[35px]">
      <div className="flex h-[111px] items-center text-[41px] font-semibold tracking-[0.6px] text-[#e2e2e2]">
        ETF高手圈
        <CardChevron />
      </div>
      <svg className="ml-auto mt-[33px] h-[84px] w-[84px]" viewBox="0 0 84 84">
        <circle cx="42" cy="42" r="42" fill="#3374c0" />
        <path d="M20 28c-8 12-4 24 8 28-6-9-9-18-8-28ZM64 28c8 12 4 24-8 28 6-9 9-18 8-28Z" fill="#cfd6de" />
        <circle cx="42" cy="34" r="13" fill="#cfd6de" />
        <path d="M36 36c2 6 10 6 12 0" stroke="#3374c0" strokeWidth="3" fill="none" />
        <path d="M24 58c4-10 32-10 36 0Z" fill="#cfd6de" />
      </svg>
    </div>
    <div className="flex h-[150px] flex-1 rounded-[14px] bg-[#23242a] pl-[36px] pr-[35px]">
      <div className="flex h-[103px] items-center text-[41px] font-semibold tracking-[0.6px] text-[#e2e2e2]">
        ETF人气榜
        <CardChevron />
      </div>
      <svg className="ml-auto mt-[33px] h-[84px] w-[84px]" viewBox="0 0 84 84">
        <circle cx="42" cy="42" r="42" fill="#3374c0" />
        <path d="M19 36h10V60H19ZM32 22H53V60H32ZM56 42h9V60h-9Z" fill="#cfd6de" />
        <path d="M39 34l4-2v12" stroke="#3374c0" strokeWidth="3.500" fill="none" />
      </svg>
    </div>
  </div>
);

const NAV_ITEMS = [
  {
    name: '交易',
    icon: (
      <>
        <path d="M13 7A27 27 0 0 1 50 46M44 52A27 27 0 0 1 7 13M-3 18l9-5 1 9M61 39l-6 7-4-6" />
        <path d="M19 16l10 13L39 16M19 28h20M19 36h20M29 28v16" />
      </>
    ),
  },
  {
    name: '定投',
    icon: (
      <>
        <path d="M13 5H3V52H55V5H46M18 1V9M41 1V9M18 5H41" />
        <path d="M12 38 24 27l6 8L44 21M36 20h9v8" />
      </>
    ),
  },
  {
    name: '发帖',
    icon: (
      <>
        <path d="M40 2H9a6 6 0 0 0-6 6V49a6 6 0 0 0 6 6H49a6 6 0 0 0 6-6V18" />
        <path d="M22 36l3-8L46 8l4 4L30 31ZM50 3l4 4" strokeWidth="4" />
      </>
    ),
  },
  {
    name: '功能',
    icon: (
      <>
        <rect x="4" y="3" width="22" height="22" rx="4" />
        <rect x="4" y="31" width="22" height="22" rx="4" />
        <rect x="31" y="31" width="22" height="22" rx="4" />
        <path d="M42 2l12 12-12 12-12-12Z" strokeLinejoin="round" />
      </>
    ),
  },
  {
    name: '设自选',
    icon: (
      <>
        <circle cx="29" cy="28.500" r="26.500" />
        <path d="M15 28.500h4.500M27 28.500h4.500M38.500 28.500H43" strokeWidth="5" />
      </>
    ),
  },
];

const BottomBar = () => (
  <footer className="h-[178px] border-t-2 border-[#333] bg-[#1c1c1c]">
    <div className="flex h-[163px]">
      <div className="w-[275px] whitespace-nowrap pt-[8px] leading-none">
        <svg className="ml-[127px] block h-[8px] w-[22px]" viewBox="0 0 22 8">
          <path d="M0 8 11 0 22 8Z" fill="#77777c" />
        </svg>
        <div className="mt-[8px] h-[50px] pl-[64px] text-[40px] leading-[50px] tracking-[-0.5px] text-[#dd1010]">3473.81</div>
        <div className="flex h-[50px] items-center justify-between pl-[40px] pr-[9px]">
          <span className="text-[35.500px] text-[#8a8a8f]">上证</span>
          <span className="text-[38px] tracking-[0.6px] text-[#dd1010]">0.11%</span>
        </div>
      </div>
      {NAV_ITEMS.map((item) => (
        <div key={item.name} className="flex w-[161px] flex-col items-center pt-[10px] text-[35.500px] text-[#8a8a8f]">
          <svg className="h-[58px] w-[58px] overflow-visible" viewBox="0 0 58 58" fill="none" stroke="#8a8a8f" strokeWidth="2.800">
            {item.icon}
          </svg>
          <span className="mt-[14px] h-[50px] leading-[50px]">{item.name}</span>
        </div>
      ))}
    </div>
    <div className="mx-auto h-[10px] w-[434px] rounded-full border-2 border-[#303030] bg-[#222]" />
  </footer>
);

export default function App() {
  return (
    <div className="h-[2340px] w-[1080px] overflow-hidden bg-[#0d0d0d] font-['Inter','Noto_Sans_CJK_SC',sans-serif]">
      <div className="bg-[#1c1c1c]">
        <StatusBar />
        <Header />
        <Quote />
        <PeriodTabs />
      </div>
      <PriceInfo />
      <PriceChart />
      <RsiBar />
      <RsiChart />
      <Dates />
      <Banner />
      <SectionTabs />
      <Cards />
      <BottomBar />
    </div>
  );
}
